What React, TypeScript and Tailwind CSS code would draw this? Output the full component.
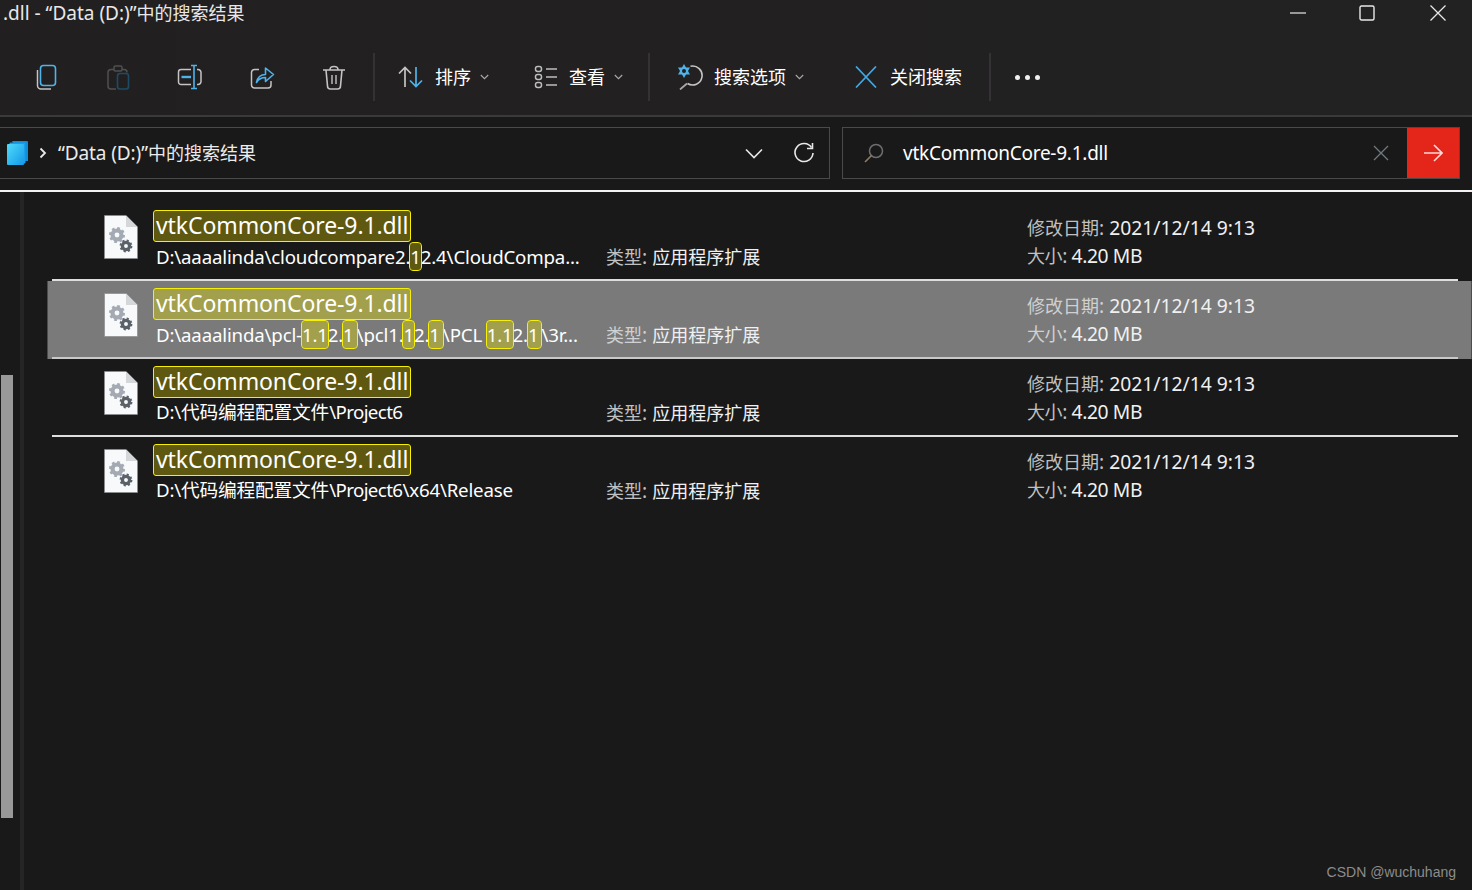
import React from "react";

const FONT = '"Noto Sans","Noto Sans CJK SC",sans-serif';

function Copy() {
  return (
    <svg width="28" height="28" viewBox="0 0 28 28" fill="none">
      <rect x="8.500" y="2.500" width="15" height="20" rx="3" stroke="#4fb3ea" strokeWidth="1.600" />
      <path d="M5.500 7v15.500a3.500 3.500 0 0 0 3.500 3.500h10" stroke="#c4c4c4" strokeWidth="1.500" />
    </svg>
  );
}
function Paste() {
  return (
    <svg width="28" height="28" viewBox="0 0 28 28" fill="none">
      <path d="M10 6.500H7a3 3 0 0 0-3 3V23a3 3 0 0 0 3 3h5M18 6.500h2a3 3 0 0 1 3 3v0" stroke="#505050" strokeWidth="1.500" />
      <rect x="10" y="3" width="8" height="5" rx="1.500" stroke="#505050" strokeWidth="1.500" />
      <rect x="13.500" y="10.500" width="11" height="15.500" rx="2.500" stroke="#1f4c63" strokeWidth="1.600" />
    </svg>
  );
}
function Rename() {
  return (
    <svg width="28" height="28" viewBox="0 0 28 28" fill="none">
      <path d="M15 6.500H5a2.500 2.500 0 0 0-2.500 2.500v10a2.500 2.500 0 0 0 2.500 2.500h10M21 6.500h1a3 3 0 0 1 3 3v9a3 3 0 0 1-3 3h-1" stroke="#c4c4c4" strokeWidth="1.500" />
      <path d="M15 2.500h6M18 2.500v23M15 25.500h6" stroke="#4fb3ea" strokeWidth="1.600" />
      <path d="M5.500 14h9.500" stroke="#4fb3ea" strokeWidth="2.400" />
    </svg>
  );
}
function Share() {
  return (
    <svg width="28" height="28" viewBox="0 0 28 28" fill="none">
      <path d="M11 6.500H6.500a3 3 0 0 0-3 3V22a3 3 0 0 0 3 3H20a3 3 0 0 0 3-3v-4" stroke="#c4c4c4" strokeWidth="1.500" />
      <path d="M8.500 19.500c1-5 4.500-8 9-8V5l8 6.500-8 7v-4c-4 0-6.500 1-9 5z" stroke="#4fb3ea" strokeWidth="1.600" strokeLinejoin="round" />
    </svg>
  );
}
function Trash() {
  return (
    <svg width="28" height="28" viewBox="0 0 28 28" fill="none" stroke="#c4c4c4" strokeWidth="1.600">
      <path d="M3 7h22M10 6.500c0-4 8-4 8 0" />
      <path d="M6 7l1.500 16a3 3 0 0 0 3 3h7a3 3 0 0 0 3-3L22 7" />
      <path d="M12 12v9M16 12v9" strokeWidth="1.400" />
    </svg>
  );
}
function Sort() {
  return (
    <svg width="26" height="24" viewBox="0 0 26 24" fill="none" strokeWidth="1.700">
      <path d="M7 22V2.500M1 8.500l6-6 6 6" stroke="#c4c4c4" />
      <path d="M18 2v19.500M12 15.500l6 6 6-6" stroke="#4fb3ea" />
    </svg>
  );
}
function ViewIcon() {
  return (
    <svg width="24" height="24" viewBox="0 0 24 24" fill="none" stroke="#bdbdbd" strokeWidth="1.500">
      <rect x="1.500" y="1.500" width="6" height="5" rx="2.200" />
      <rect x="1.500" y="9.500" width="6" height="5" rx="2.200" />
      <rect x="1.500" y="17.500" width="6" height="5" rx="2.200" />
      <path d="M12 4h11M12 12h11M12 20h11" />
    </svg>
  );
}
function SearchOptions() {
  return (
    <svg width="26" height="26" viewBox="0 0 26 26" fill="none">
      <path d="M13.500 2.200a9.500 9.500 0 1 1-3 17.300" stroke="#c4c4c4" strokeWidth="1.600" />
      <path d="M10 19.500l-7 6" stroke="#a8a8a8" strokeWidth="1.800" />
      <path d="M7 0l6 10.500H1z" fill="#4fb3ea" />
      <path d="M7 14L1 3.500h12z" fill="#4fb3ea" />
      <circle cx="7" cy="7" r="2" fill="#221f21" />
    </svg>
  );
}
function BigX() {
  return (
    <svg width="22" height="22" viewBox="0 0 22 22" stroke="#3fa9e6" strokeWidth="1.700" fill="none">
      <path d="M1 .5l20 21M21 .5l-20 21" />
    </svg>
  );
}
function Chev() {
  return (
    <svg width="9" height="6" viewBox="0 0 9 6" fill="none" stroke="#aaaaaa" strokeWidth="1.100">
      <path d="M.8 1l3.700 3.700L8.200 1" />
    </svg>
  );
}
function Divider() {
  return <div className="w-[2px] h-[48px] bg-[#343235]" />;
}
function IconBtn({ children }: { children: React.ReactNode }) {
  return <div className="w-[72px] flex justify-center">{children}</div>;
}

function Gear({ cx, cy, r, color }: { cx: number; cy: number; r: number; color: string }) {
  const circ = 2 * Math.PI * (r * 0.92);
  return (
    <g fill="none" stroke={color}>
      <circle cx={cx} cy={cy} r={r * 0.6} strokeWidth={r * 0.55} />
      <circle cx={cx} cy={cy} r={r * 0.92} strokeWidth={r * 0.3} strokeDasharray={`${circ / 16} ${circ / 16}`} />
    </g>
  );
}
function FileIcon() {
  return (
    <svg width="34" height="44" viewBox="0 0 34 44" className="block">
      <path d="M.5.500H22L33.500 12v31.500H.5z" fill="#f8f9fa" stroke="#8a8c8f" strokeWidth="0.700" />
      <path d="M22 .5V12h11.500z" fill="#d4d6d9" />
      <Gear cx={13} cy={20} r={7.500} color="#a3aab3" />
      <Gear cx={22} cy={31} r={6} color="#5b6168" />
    </svg>
  );
}

function H({ children, selected, tail }: { children: React.ReactNode; selected?: boolean; tail?: boolean }) {
  return (
    <span className={`rounded-[3px] outline outline-1 outline-[#f7f000] py-[1px] ${tail ? "pr-[3px]" : ""} ${selected ? "bg-[#a2a04d]" : "bg-[#5f5810]"}`}>{children}</span>
  );
}

function Lat({ children }: { children: React.ReactNode }) {
  return <span className="text-[19.300px]">{children}</span>;
}

type RowProps = { path: React.ReactNode; selected?: boolean; last?: boolean; lowPath?: boolean };

function Row({ path, selected, last, lowPath }: RowProps) {
  const label = selected ? "text-[#d0d0d0]" : "text-[#c0c0c0]";
  return (
    <div className={selected ? "pl-[4px] pr-[13px] bg-[#7a7a7a] border-x border-[#4c4c4c]" : "pl-[5px] pr-[14px]"}>
      <div className={`h-[78px] flex ${last ? "" : selected ? "border-b-2 border-[#c9c9c9]" : "border-b-2 border-[#dedede]"}`}>
        <div className="w-[101px] pl-[52px] pt-[12px] shrink-0">
          <FileIcon />
        </div>
        <div className="w-[453px] shrink-0 pt-[7px]">
          <div className={`w-[258px] h-[32px] pl-[2px] rounded-[3px] border border-[#f7f000] text-[23px] leading-[29px] text-white whitespace-nowrap tracking-[-0.1px] ${selected ? "bg-[#a2a04d]" : "bg-[#5f5810]"}`}>
            vtkCommonCore-9.1.dll
          </div>
          <div className={`pl-[3px] text-[18.700px] leading-[28px] tracking-[-0.18px] text-white whitespace-nowrap ${lowPath ? "mt-[1px]" : ""}`}>{path}</div>
        </div>
        <div className="w-[421px] shrink-0 pt-[40px] text-[18px] leading-[28px] whitespace-nowrap text-[#f0f0f0]">
          <span className={label}>类型<Lat>:</Lat></span><Lat> </Lat>应用程序扩展
        </div>
        <div className="pt-[11px] text-[18px] leading-[28px] whitespace-nowrap text-[#f0f0f0]">
          <div><span className={label}>修改日期<Lat>:</Lat></span><Lat> 2021/12/14 9:13</Lat></div>
          <div className="tracking-[-0.4px]"><span className={label}>大小<Lat>:</Lat></span><Lat> 4.20 MB</Lat></div>
        </div>
      </div>
    </div>
  );
}

export default function App() {
  return (
    <div className="relative w-[1472px] h-[890px] overflow-hidden bg-[#191919] flex flex-col" style={{ fontFamily: FONT }}>
      {/* title and toolbar */}
      <div className="h-[117px] shrink-0 border-b-2 border-[#3b3a3b] bg-gradient-to-r from-[#221f21] to-[#222222] flex flex-col">
        <div className="h-[26px] flex items-center justify-between">
          <div className="pl-[3px] text-[18px] leading-[26px] text-[#e8e8e8] whitespace-nowrap">
            <span className="text-[19px]">.dll - “Data (D:)”</span>中的搜索结果
          </div>
          <div className="flex items-center pr-[26px]">
            <svg width="16" height="16" viewBox="0 0 16 16" stroke="#e8e8e8" fill="none" className="mr-[53px]">
              <path d="M0 8h16" strokeWidth="1.200" />
            </svg>
            <svg width="16" height="16" viewBox="0 0 16 16" stroke="#e8e8e8" fill="none" className="mr-[55px]">
              <rect x="1" y="1" width="14" height="14" rx="1.500" strokeWidth="1.400" />
            </svg>
            <svg width="16" height="16" viewBox="0 0 16 16" stroke="#e8e8e8" fill="none">
              <path d="M.5.500l15 15M15.500.5l-15 15" strokeWidth="1.300" />
            </svg>
          </div>
        </div>
        <div className="h-[48px] mt-[27px] pl-[10px] flex items-center text-[18px] text-white whitespace-nowrap">
          <IconBtn><Copy /></IconBtn>
          <IconBtn><Paste /></IconBtn>
          <IconBtn><Rename /></IconBtn>
          <IconBtn><Share /></IconBtn>
          <IconBtn><Trash /></IconBtn>
          <div className="ml-[3px]"><Divider /></div>
          <div className="ml-[23px] flex items-center">
            <Sort />
            <span className="ml-[11px] w-[36px]">排序</span>
            <span className="ml-[9px] flex"><Chev /></span>
          </div>
          <div className="ml-[45px] flex items-center">
            <ViewIcon />
            <span className="ml-[11px] w-[36px]">查看</span>
            <span className="ml-[9px] flex"><Chev /></span>
          </div>
          <div className="ml-[25px]"><Divider /></div>
          <div className="ml-[27px] flex items-center">
            <SearchOptions />
            <span className="ml-[11px] w-[72px]">搜索选项</span>
            <span className="ml-[9px] flex"><Chev /></span>
          </div>
          <div className="ml-[51px] flex items-center">
            <BigX />
            <span className="ml-[13px] w-[72px]">关闭搜索</span>
          </div>
          <div className="ml-[27px]"><Divider /></div>
          <div className="ml-[24px] flex gap-[5px]">
            <span className="w-[5px] h-[5px] rounded-full bg-[#f0f0f0]" />
            <span className="w-[5px] h-[5px] rounded-full bg-[#f0f0f0]" />
            <span className="w-[5px] h-[5px] rounded-full bg-[#f0f0f0]" />
          </div>
        </div>
      </div>

      {/* address row */}
      <div className="h-[73px] shrink-0 pt-[10px] flex">
        <div className="w-[830px] h-[52px] border border-l-0 border-[#4a4a4a] flex items-center pl-[7px] pr-[14px]">
          <svg width="21" height="24" viewBox="0 0 21 24" className="shrink-0">
            <defs>
              <linearGradient id="f" x1="0" y1="0" x2="1" y2="1">
                <stop offset="0" stopColor="#4fdcfb" />
                <stop offset="1" stopColor="#1498e8" />
              </linearGradient>
            </defs>
            <path d="M5 0h15a1 1 0 0 1 1 1v19h-5z" fill="#0f8edc" />
            <rect x="2.500" y="1.500" width="16" height="21" rx="1" fill="#1b9fe8" />
            <rect x="0" y="3" width="17" height="21" rx="1" fill="url(#f)" />
          </svg>
          <svg width="8" height="12" viewBox="0 0 8 12" fill="none" stroke="#e8e8e8" strokeWidth="1.800" className="ml-[11px]">
            <path d="M1.500 1.500l4.500 4.500-4.500 4.500" />
          </svg>
          <span className="ml-[11px] text-[18px] text-[#ebebeb] whitespace-nowrap">
            <span className="text-[19px] tracking-[-0.1px]">“Data (D:)”</span>中的搜索结果
          </span>
          <svg width="18" height="11" viewBox="0 0 18 11" fill="none" stroke="#e8e8e8" strokeWidth="1.600" className="ml-auto mr-[30px]">
            <path d="M1 1.500l8 8 8-8" />
          </svg>
          <svg width="22" height="22" viewBox="0 0 22 22" fill="none" stroke="#e8e8e8" strokeWidth="1.600">
            <path d="M18.500 5.500A9 9 0 1 0 20 11" />
            <path d="M19.500 1v5.500H14" />
          </svg>
        </div>
        <div className="ml-[12px] w-[618px] h-[52px] border border-[#4a4a4a] flex items-center pl-[21px]">
          <svg width="20" height="20" viewBox="0 0 20 20" fill="none" className="shrink-0">
            <circle cx="12" cy="8" r="6.500" stroke="#6e6e6e" strokeWidth="1.500" />
            <path d="M7.500 12.500L1 19" stroke="#8a7a5a" strokeWidth="1.700" />
          </svg>
          <span className="ml-[19px] text-[19px] tracking-[-0.25px] text-white whitespace-nowrap">vtkCommonCore-9.1.dll</span>
          <svg width="16" height="16" viewBox="0 0 16 16" fill="none" stroke="#6f7a80" strokeWidth="1.300" className="ml-auto mr-[18px]">
            <path d="M1 1l14 14M15 1L1 15" />
          </svg>
          <div className="w-[52px] h-[50px] bg-[#e4261a] flex items-center justify-center shrink-0">
            <svg width="20" height="18" viewBox="0 0 20 18" fill="none" stroke="#ffd9d6" strokeWidth="1.600">
              <path d="M1 9h18M11 1l8 8-8 8" />
            </svg>
          </div>
        </div>
      </div>

      {/* white line */}
      <div className="h-[2px] shrink-0 bg-[#f2f2f2]" />

      {/* body */}
      <div className="flex-1 flex min-h-0">
        <div className="w-[20px] shrink-0 pl-[1px] pt-[183px]">
          <div className="w-[12px] h-[443px] bg-[#999999]" />
        </div>
        <div className="w-[4px] shrink-0 bg-[#252525]" />
        <div className="flex-1 pl-[23px] pt-[11px]">
          <Row lowPath path={<>D:\aaaalinda\cloudcompare2.<H>1</H>2.4\CloudCompa...</>} />
          <Row lowPath selected path={<>D:\aaaalinda\pcl-<H selected>1.1</H>2.<H selected tail>1</H>\pcl1.<H selected>1</H>2.<H selected tail>1</H>\PCL <H selected>1.1</H>2.<H selected tail>1</H>\3r...</>} />
          <Row path={<>D:\代码编程配置文件<span className="tracking-[-0.6px]">\Project6</span></>} />
          <Row last path={<>D:\代码编程配置文件<span className="tracking-[-0.6px]">\Project6</span>\x64\Release</>} />
        </div>
      </div>

      <div className="absolute right-[16px] bottom-[9px] text-[14px] leading-[18px] text-[#8c8c8c]" style={{ fontFamily: '"Liberation Sans",sans-serif' }}>
        CSDN @wuchuhang
      </div>
    </div>
  );
}
